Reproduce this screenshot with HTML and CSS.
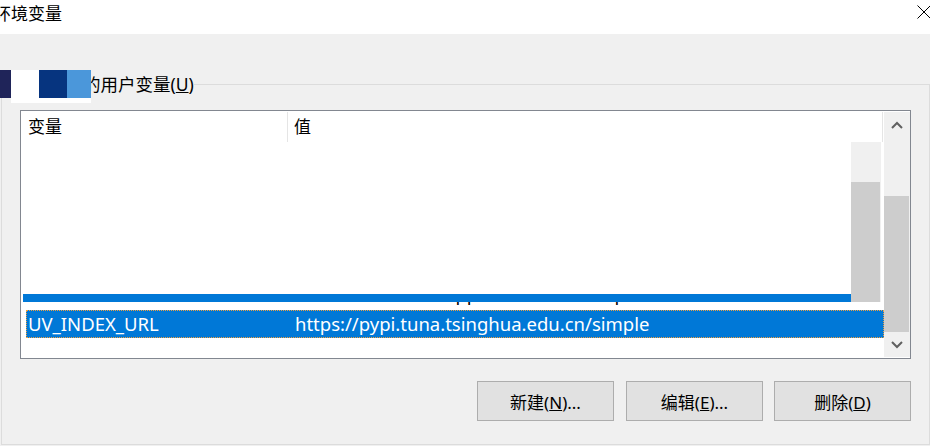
FILE: index.html
```html
<!DOCTYPE html>
<html lang="zh-CN">
<head>
    <meta charset="UTF-8">
    <title>环境变量</title>
    <link rel="stylesheet" href="styles.css">
</head>
<body>
    <div class="window">
        <!-- Title bar -->
        <div class="titlebar">
            <span class="title">环境变量</span>
            <svg class="close" width="14" height="14" viewBox="0 0 14 14">
                <path d="M0.5 0.5 L13.5 13.5 M13.5 0.5 L0.5 13.5" stroke="#000" stroke-width="1" fill="none"/>
            </svg>
        </div>

        <!-- User variables -->
        <fieldset class="group">
            <legend class="group-label"><span class="redact"><span class="r-navy"></span><span class="r-white"><span class="r-dark"></span><span class="r-light"></span></span></span>的用户变量(<u>U</u>)</legend>

            <div class="listbox">
                <div class="list-main">
                    <div class="list-head">
                        <div class="head-cell head-name">变量</div>
                        <div class="head-cell head-value">值</div>
                    </div>
                    <div class="list-body">
                        <div class="ghost">
                            <div class="ghost-left"><div class="ghost-bar"></div></div>
                            <div class="ghost-scroll"><div class="ghost-thumb"></div></div>
                        </div>
                        <div class="row-clip">
                            <div class="row-inner">
                                <span class="cell-name">TMP</span>
                                <span class="cell-value">C:\Users\Lenovo\AppData\Local\Temp</span>
                            </div>
                        </div>
                        <div class="row selected">
                            <span class="cell-name">UV_INDEX_URL</span>
                            <span class="cell-value">https://pypi.tuna.tsinghua.edu.cn/simple</span>
                        </div>
                    </div>
                </div>
                <div class="vscroll">
                    <div class="arrow">
                        <svg width="12" height="8" viewBox="0 0 12 8"><path d="M1 7 L6 2 L11 7" stroke="#606060" stroke-width="2" fill="none"/></svg>
                    </div>
                    <div class="track"><div class="thumb"></div></div>
                    <div class="arrow">
                        <svg width="12" height="8" viewBox="0 0 12 8"><path d="M1 1 L6 6 L11 1" stroke="#606060" stroke-width="2" fill="none"/></svg>
                    </div>
                </div>
            </div>

            <div class="buttons">
                <button class="btn first">新建(<u>N</u>)...</button>
                <button class="btn">编辑(<u>E</u>)...</button>
                <button class="btn">删除(<u>D</u>)</button>
            </div>
        </fieldset>
    </div>
</body>
</html>
```

FILE: styles.css
```css
body {
    margin: 0;
    background: #f0f0f0;
    font-family: "Noto Sans", "Noto Sans CJK SC", sans-serif;
    font-size: 17px;
    color: #000;
}

.window {
    width: 930px;
    height: 446px;
    overflow: hidden;
}

/* title bar */
.titlebar {
    height: 34px;
    background: #fff;
    display: flex;
    justify-content: space-between;
    align-items: flex-start;
    overflow: hidden;
}

.title {
    margin-left: -6px;
    line-height: 27px;
}

.close {
    margin-top: 5px;
    margin-right: -1px;
}

/* group box */
.group {
    box-sizing: border-box;
    width: 929px;
    height: 375px;
    margin: 36px 0 0 1px;
    padding: 0;
    border: 1px solid #dcdcdc;
    min-width: 0;
}

.group-label {
    margin-left: -2px;
    padding: 0;
    font-size: 17.5px;
    line-height: 28px;
    height: 28px;
}

.redact {
    display: inline-flex;
    align-items: flex-start;
    vertical-align: top;
    height: 28px;
    margin-right: -8px;
    position: relative;
    z-index: 1;
}

.r-navy {
    width: 11px;
    height: 28px;
    background: #1f2459;
}

.r-white {
    display: flex;
    width: 80px;
    height: 33px;
    margin-bottom: -5px;
    background: #fff;
}

.r-dark {
    width: 28px;
    height: 28px;
    margin-left: 28px;
    background: #06347f;
}

.r-light {
    width: 24px;
    height: 28px;
    background: #4b97da;
}

/* list view */
.listbox {
    box-sizing: border-box;
    width: 891px;
    height: 249px;
    margin: 12px 0 0 18px;
    border: 1px solid #828790;
    background: #fff;
    display: flex;
}

.list-main {
    flex: 1;
    display: flex;
    flex-direction: column;
    min-width: 0;
}

.list-head {
    display: flex;
    height: 31px;
    width: 862px;
}

.head-cell {
    box-sizing: border-box;
    margin-top: 1px;
    line-height: 30px;
    border-right: 1px solid #e5e5e5;
}

.head-name {
    width: 267px;
    padding-left: 7px;
}

.head-value {
    flex: 1;
    padding-left: 6px;
}

.list-body {
    flex: 1;
    display: flex;
    flex-direction: column;
}

.ghost {
    display: flex;
    height: 160px;
}

.ghost-left {
    width: 830px;
    display: flex;
    flex-direction: column;
    justify-content: flex-end;
}

.ghost-bar {
    height: 8px;
    margin-left: 2px;
    background: #0078d7;
}

.ghost-scroll {
    width: 30px;
    background: #f0f0f0;
    display: flex;
    flex-direction: column;
    justify-content: flex-end;
}

.ghost-thumb {
    width: 29px;
    height: 120px;
    background: #cdcdcd;
}

.row-clip {
    height: 6px;
    overflow: hidden;
}

.row-inner {
    display: grid;
    grid-template-columns: 261px auto;
    margin: -22px 0 0 5px;
    font-size: 18.5px;
    line-height: 28px;
    white-space: nowrap;
}

.row {
    box-sizing: border-box;
    display: grid;
    grid-template-columns: 261px auto;
    height: 28px;
    margin: 2px 0 0 5px;
    font-size: 18.5px;
    line-height: 26px;
    white-space: nowrap;
}

.cell-name {
    padding-left: 1px;
}

.cell-value {
    padding-left: 7px;
}

.selected {
    background: #0078d7;
    color: #fff;
    border: 1px dotted #f0a040;
}

/* scroll bar */
.vscroll {
    width: 26px;
    margin: 1px 0;
    background: #f0f0f0;
    display: flex;
    flex-direction: column;
}

.arrow {
    height: 25px;
    display: flex;
    align-items: center;
    justify-content: center;
}

.track {
    flex: 1;
    display: flex;
    flex-direction: column;
    justify-content: flex-end;
}

.thumb {
    width: 25px;
    height: 136px;
    background: #cdcdcd;
}

/* buttons */
.buttons {
    display: flex;
    justify-content: flex-end;
    gap: 11px;
    margin: 22px 18px 0 0;
}

.btn {
    width: 137px;
    height: 40px;
    background: #e1e1e1;
    border: 1px solid #adadad;
    font-family: "Noto Sans", "Noto Sans CJK SC", sans-serif;
    font-size: 17px;
    color: #000;
    padding: 0;
}

.btn.first {
    margin-right: 1px;
}
```
